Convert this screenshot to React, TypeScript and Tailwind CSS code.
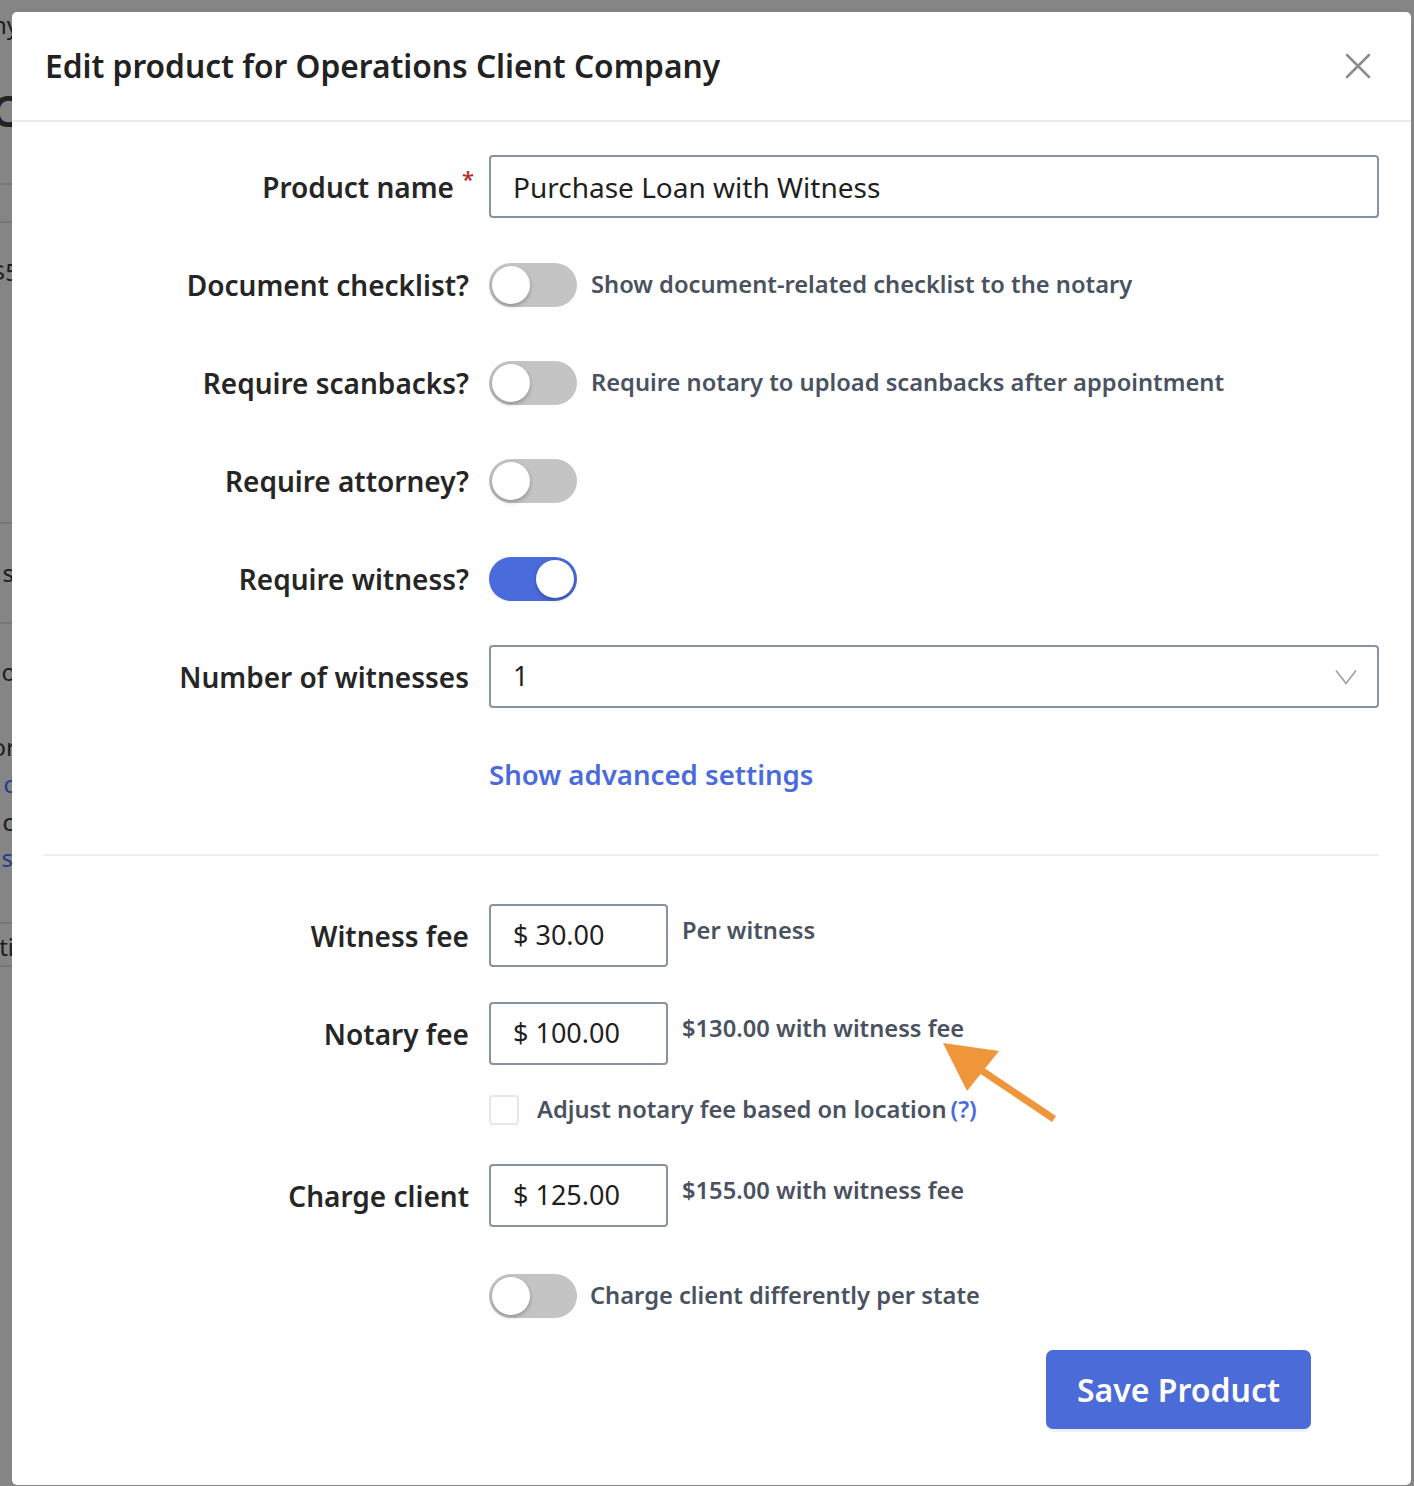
import React from "react";

function Toggle({ on = false }: { on?: boolean }) {
  return (
    <div
      className={`flex items-center w-[88px] h-[44px] rounded-full shrink-0 px-[3px] ${
        on ? "bg-[#4a6bdb] justify-end" : "bg-[#c4c4c4] justify-start"
      }`}
    >
      <div className="w-[38px] h-[38px] rounded-full bg-white shadow-[0_2px_4px_rgba(0,0,0,0.28)]" />
    </div>
  );
}

function Label({ children }: { children: React.ReactNode }) {
  return (
    <div className="w-[445px] shrink-0 pr-[20px] text-right text-[28px] font-semibold text-[#262626] leading-none">
      {children}
    </div>
  );
}

function Frag({
  text,
  mt,
  h = 32,
  cls = "",
  mr = "mr-[-7px]",
}: {
  text: string;
  mt: string;
  h?: number;
  cls?: string;
  mr?: string;
}) {
  return (
    <div className={`${mt} w-[12px] overflow-hidden flex justify-end items-center ${cls}`} style={{ height: h }}>
      <span className={`shrink-0 whitespace-nowrap ${mr}`}>{text}</span>
    </div>
  );
}

function Line({ mt }: { mt: string }) {
  return <div className={`${mt} h-[2px] w-[12px] bg-[#767676]`} />;
}

function FeeInput({ value }: { value: string }) {
  return (
    <div className="w-[179px] h-[63px] shrink-0 border-2 border-[#8892a2] rounded-[4px] flex items-center pl-[22px] text-[27px] text-[#1f1f1f]">
      {value}
    </div>
  );
}

const desc = "text-[23.7px] font-semibold text-[#4a5261]";

export default function App() {
  return (
    <div className="w-full h-[1486px] overflow-hidden bg-[#858585] flex font-['Noto_Sans','Open_Sans',sans-serif]">
      {/* background page fragments (dimmed under overlay) */}
      <div className="w-[12px] shrink-0 flex flex-col text-[24px] text-[#1c1c1c]">
        <Frag text="any" mt="mt-[9px]" />
        <Frag text="C" mt="mt-[47px]" h={44} cls="text-[44px] font-semibold text-[#222]" />
        <Line mt="mt-[51px]" />
        <Line mt="mt-[36px]" />
        <Frag text="$5" mt="mt-[33px]" />
        <Line mt="mt-[234px]" />
        <Frag text="s" mt="mt-[33px]" mr="mr-[-2px]" />
        <Line mt="mt-[33px]" />
        <Frag text="o" mt="mt-[32px]" mr="mr-[-4px]" />
        <Frag text="or" mt="mt-[43px]" mr="mr-[-4px]" />
        <Frag text="c" mt="mt-[5px]" cls="text-[#253b8f]" mr="mr-[-3px]" />
        <Frag text="c" mt="mt-[6px]" mr="mr-[-2px]" />
        <Frag text="s" mt="mt-[4px]" cls="text-[#253b8f]" mr="mr-[-1px]" />
        <Line mt="mt-[48px]" />
        <Frag text="ti" mt="mt-[7px]" mr="mr-[-2px]" />
        <Line mt="mt-[2px]" />
      </div>

      {/* modal */}
      <div className="relative mt-[12px] w-[1399px] h-[1473px] shrink-0 bg-white rounded-[5px] flex flex-col">
        {/* header */}
        <div className="h-[110px] shrink-0 border-b-2 border-[#e9ecef] flex items-center justify-between pl-[33px] pr-[40px]">
          <div className="text-[31.7px] font-semibold text-[#222]">
            Edit product for Operations Client Company
          </div>
          <svg width="26" height="26" viewBox="0 0 26 26" fill="none">
            <path d="M2 2 L24 24 M24 2 L2 24" stroke="#8c8c8c" strokeWidth="2.5" strokeLinecap="round" />
          </svg>
        </div>

        {/* body */}
        <div className="flex flex-col px-[32px] pt-[33px]">
          <div className="flex flex-col gap-[35px]">
            <div className="flex items-center h-[63px]">
              <Label>
                <span className="mr-[-5px]">
                  Product name
                  <span className="text-[#b8322b] text-[22px] align-top ml-[8px] relative top-[-6px]">*</span>
                </span>
              </Label>
              <div className="flex-1 h-[63px] border-2 border-[#8892a2] rounded-[4px] flex items-center pl-[22px] text-[28px] text-[#1f1f1f]">
                Purchase Loan with Witness
              </div>
            </div>

            <div className="flex items-center h-[63px]">
              <Label>Document checklist?</Label>
              <Toggle />
              <div className={`ml-[14px] ${desc}`}>Show document-related checklist to the notary</div>
            </div>

            <div className="flex items-center h-[63px]">
              <Label>Require scanbacks?</Label>
              <Toggle />
              <div className={`ml-[14px] ${desc}`}>Require notary to upload scanbacks after appointment</div>
            </div>

            <div className="flex items-center h-[63px]">
              <Label>Require attorney?</Label>
              <Toggle />
            </div>

            <div className="flex items-center h-[63px]">
              <Label>Require witness?</Label>
              <Toggle on />
            </div>

            <div className="flex items-center h-[63px]">
              <Label>Number of witnesses</Label>
              <div className="flex-1 h-[63px] border-2 border-[#8892a2] rounded-[4px] flex items-center justify-between pl-[22px] pr-[20px] text-[27px] text-[#1f1f1f]">
                <span>1</span>
                <svg width="22" height="16" viewBox="0 0 22 16" fill="none">
                  <path d="M1 1.5 L11 14.5 L21 1.5" stroke="#9aa0a8" strokeWidth="1.6" />
                </svg>
              </div>
            </div>

            <div className="flex items-center h-[63px]">
              <div className="w-[445px] shrink-0" />
              <div className="text-[27.6px] font-semibold text-[#4a6bdb]">Show advanced settings</div>
            </div>
          </div>

          <div className="mt-[48px] h-[2px] bg-[#eceef1]" />

          <div className="mt-[48px] flex items-center h-[63px]">
            <Label>Witness fee</Label>
            <FeeInput value="$ 30.00" />
            <div className={`self-start mt-[9px] ml-[14px] ${desc}`}>Per witness</div>
          </div>

          <div className="mt-[35px] flex items-center h-[63px]">
            <Label>Notary fee</Label>
            <FeeInput value="$ 100.00" />
            <div className={`self-start mt-[9px] ml-[14px] ${desc}`}>$130.00 with witness fee</div>
          </div>

          <div className="mt-[29px] flex items-center h-[32px]">
            <div className="w-[445px] shrink-0" />
            <div className="w-[30px] h-[30px] shrink-0 border-2 border-[#e3e8ee] rounded-[4px]" />
            <div className={`ml-[18px] ${desc}`}>
              Adjust notary fee based on location
              <span className="ml-[4px] text-[#4a6bdb]">(?)</span>
            </div>
          </div>

          <div className="mt-[38px] flex items-center h-[63px]">
            <Label>Charge client</Label>
            <FeeInput value="$ 125.00" />
            <div className={`self-start mt-[9px] ml-[14px] ${desc}`}>$155.00 with witness fee</div>
          </div>

          <div className="mt-[47px] flex items-center h-[44px]">
            <div className="w-[445px] shrink-0" />
            <Toggle />
            <div className={`ml-[13px] ${desc}`}>Charge client differently per state</div>
          </div>

          <div className="mt-[32px] flex justify-end pr-[68px]">
            <button className="w-[265px] h-[79px] rounded-[7px] bg-[#4a6bd8] text-white text-[32px] font-semibold shadow-[0_3px_0_rgba(0,0,0,0.06)]">
              Save Product
            </button>
          </div>
        </div>

        {/* annotation arrow */}
        <svg
          className="absolute left-[928px] top-[1028px]"
          width="130"
          height="100"
          viewBox="940 1040 130 100"
          fill="none"
        >
          <path d="M975 1066 L1054 1119" stroke="#f0963a" strokeWidth="7" />
          <polygon points="943,1043 999,1051 967,1091" fill="#f0963a" />
        </svg>
      </div>
    </div>
  );
}
